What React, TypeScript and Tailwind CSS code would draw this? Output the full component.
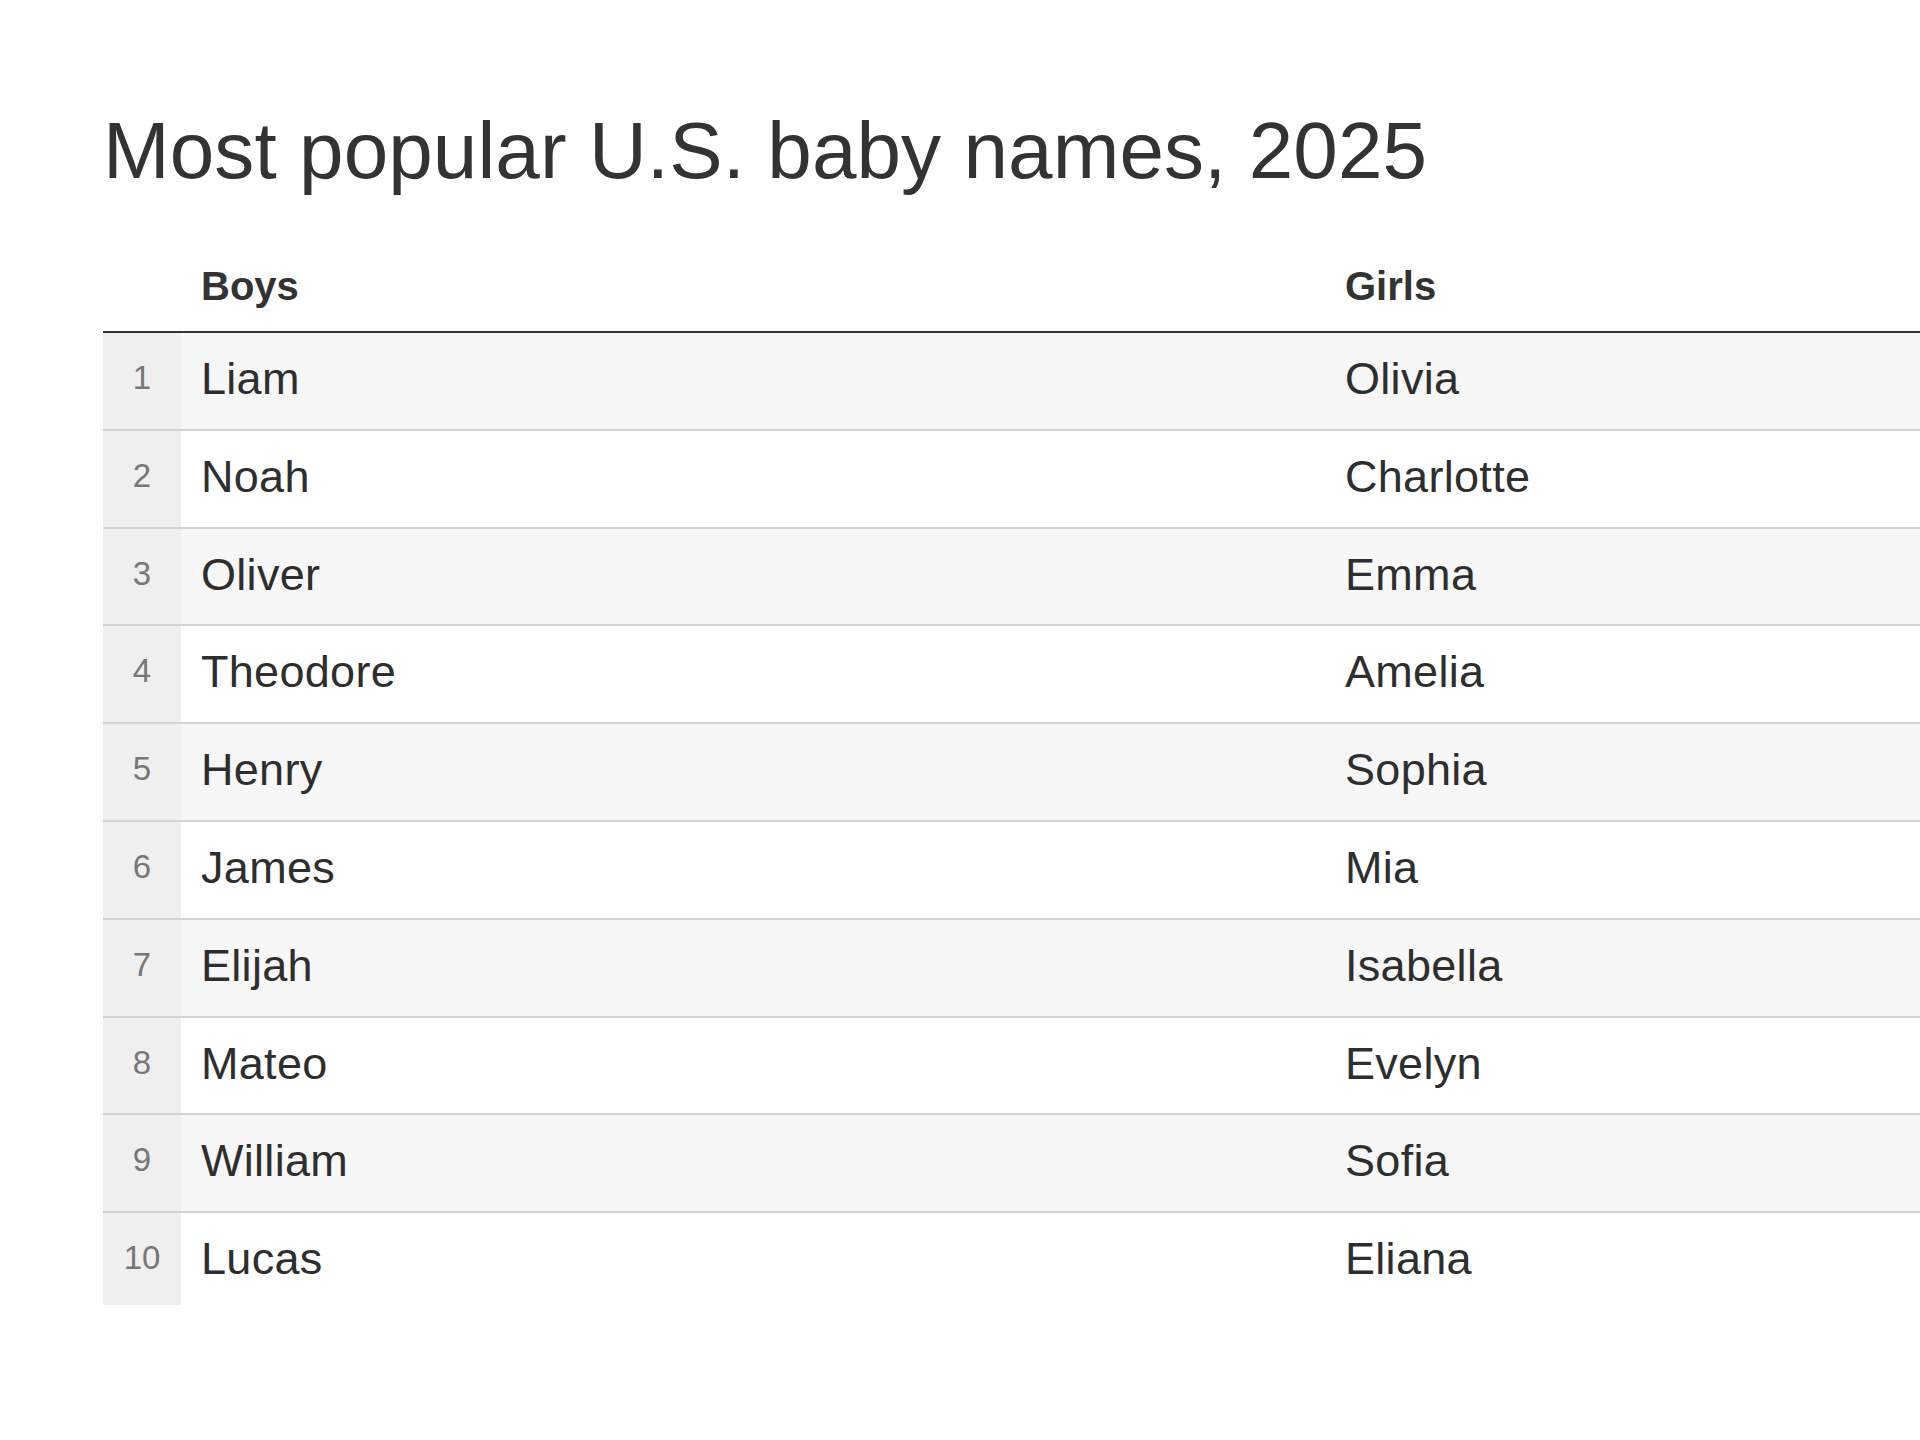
import React from 'react';

const NAMES: { rank: number; boy: string; girl: string }[] = [
  { rank: 1, boy: 'Liam', girl: 'Olivia' },
  { rank: 2, boy: 'Noah', girl: 'Charlotte' },
  { rank: 3, boy: 'Oliver', girl: 'Emma' },
  { rank: 4, boy: 'Theodore', girl: 'Amelia' },
  { rank: 5, boy: 'Henry', girl: 'Sophia' },
  { rank: 6, boy: 'James', girl: 'Mia' },
  { rank: 7, boy: 'Elijah', girl: 'Isabella' },
  { rank: 8, boy: 'Mateo', girl: 'Evelyn' },
  { rank: 9, boy: 'William', girl: 'Sofia' },
  { rank: 10, boy: 'Lucas', girl: 'Eliana' },
];

export default function App() {
  return (
    <div className="min-h-screen w-full overflow-hidden bg-white font-['Liberation_Sans',Arial,sans-serif] text-[#2e2e2e]">
      <div className="pl-[103px] pt-[111px]">
        <h1 className="text-[80px] leading-none font-normal tracking-[0.1px] text-[#333333] whitespace-nowrap">
          Most popular U.S. baby names, 2025
        </h1>

        {/* Table */}
        <div className="mt-[75px] w-[1817px]">
          {/* Header */}
          <div className="grid grid-cols-[78px_1144px_1fr] h-[67px] border-b-2 border-[#333333]">
            <div />
            <div className="pl-[20px] text-[40px] leading-[40px] font-bold text-[#333333]">Boys</div>
            <div className="pl-[20px] text-[40px] leading-[40px] font-bold text-[#333333]">Girls</div>
          </div>

          {/* Rows */}
          {NAMES.map((row, idx) => {
            const isLast = idx === NAMES.length - 1;
            return (
              <div
                key={row.rank}
                className={`grid grid-cols-[78px_1144px_1fr] ${
                  isLast ? 'h-[92px]' : 'h-[97.8px] border-b-2 border-[#d2d2d2]'
                } ${idx % 2 === 0 ? 'bg-[#f7f7f7]' : 'bg-white'}`}
              >
                <div className="bg-[#efefef] pt-[28px] text-center text-[33px] leading-[33px] text-[#777777]">
                  {row.rank}
                </div>
                <div className="pl-[20px] pt-[23px] text-[45px] leading-[45px] tracking-[0.3px]">{row.boy}</div>
                <div className="pl-[20px] pt-[23px] text-[45px] leading-[45px] tracking-[0.3px]">{row.girl}</div>
              </div>
            );
          })}
        </div>
      </div>
    </div>
  );
}
